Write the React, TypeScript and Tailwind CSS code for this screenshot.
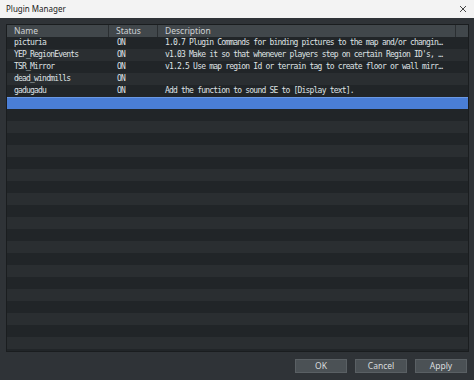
import React from "react";

const plugins = [
  { name: "picturia", status: "ON", desc: "1.0.7 Plugin Commands for binding pictures to the map and/or changing pictures" },
  { name: "YEP_RegionEvents", status: "ON", desc: "v1.03 Make it so that whenever players step on certain Region ID's, an event runs" },
  { name: "TSR_Mirror", status: "ON", desc: "v1.2.5 Use map region Id or terrain tag to create floor or wall mirrors" },
  { name: "dead_windmills", status: "ON", desc: "" },
  { name: "gadugadu", status: "ON", desc: "Add the function to sound SE to [Display text]." },
];

const TOTAL_ROWS = 27;

const mono = { fontFamily: '"DejaVu Sans Mono", monospace' };

export default function App() {
  const rows = Array.from({ length: TOTAL_ROWS }, (_, i) => (i < plugins.length ? plugins[i] : null));

  return (
    <div className="w-[474px] h-[380px] flex flex-col bg-[#2f3337] overflow-hidden select-none font-['Noto_Sans',sans-serif]">
      {/* title bar */}
      <div className="h-[18px] bg-[#f3f3f3] flex items-center justify-between pl-[6px] pr-[7px] shrink-0">
        <span className="text-[8px] text-[#1a1a1a] leading-none">Plugin Manager</span>
        <svg width="8" height="8" viewBox="0 0 8 8" className="text-[#333]">
          <path d="M1 1L7 7M7 1L1 7" stroke="currentColor" strokeWidth="0.9" />
        </svg>
      </div>

      <div className="flex-1 flex flex-col pt-[6px] pl-[6px] pr-[5px] pb-[7px]">
        {/* list */}
        <div className="h-[328px] border border-[#1a1d1f] bg-[#222629] overflow-hidden flex flex-col">
          <div className="h-[12px] flex bg-[#41474b] text-[8.5px] text-[#cdd1d4] leading-[12px] shrink-0">
            <div className="w-[102px] pl-[7px] border-r border-[#2a2e31]">Name</div>
            <div className="w-[49px] pl-[7px] border-r border-[#2a2e31]">Status</div>
            <div className="w-[298px] pl-[7px] border-r border-[#2a2e31]">Description</div>
            <div className="flex-1" />
          </div>
          {rows.map((p, i) => {
            const selected = i === 5;
            const bg = selected
              ? "bg-[#4a7ed6] border-t border-[#6a98e4]"
              : i % 2 === 0
              ? "bg-[#212528]"
              : "bg-[#2a2e31]";
            return (
              <div
                key={i}
                className={`h-[12px] flex text-[8px] tracking-[-0.8px] text-[#dfe2e4] leading-[12px] shrink-0 ${bg}`}
                style={mono}
              >
                <div className="w-[102px] pl-[7px] whitespace-nowrap overflow-hidden">{p?.name}</div>
                <div className="w-[49px] pl-[8px] whitespace-nowrap overflow-hidden">{p?.status}</div>
                <div className="w-[298px] pl-[7px] pr-[10px] whitespace-nowrap overflow-hidden text-ellipsis">{p?.desc}</div>
                <div className="flex-1" />
              </div>
            );
          })}
        </div>

        {/* buttons */}
        <div className="flex justify-end gap-[8px] mt-[7px] pr-[2px]">
          {["OK", "Cancel", "Apply"].map((b) => (
            <button
              key={b}
              className="w-[52px] h-[14px] bg-[#4b5155] border border-[#5a6064] text-[8.5px] text-[#d9dcde] leading-none flex items-center justify-center"
            >
              {b}
            </button>
          ))}
        </div>
      </div>
    </div>
  );
}
